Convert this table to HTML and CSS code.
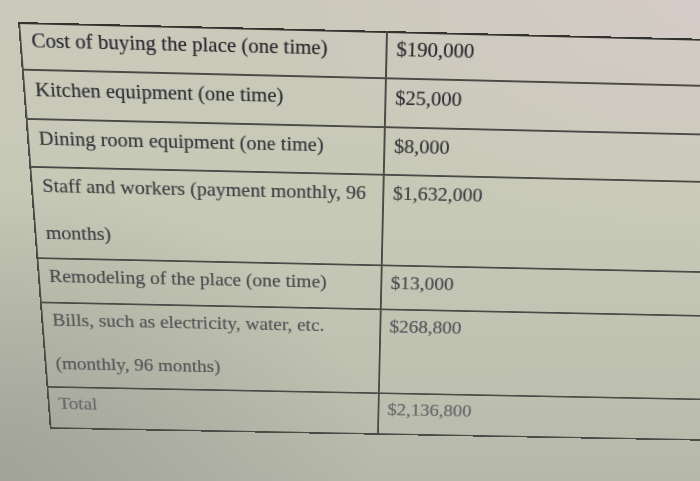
FILE: index.html
```html
<!DOCTYPE html>
<html>
<head>
<meta charset="utf-8">
<link rel="stylesheet" href="styles.css">
</head>
<body>
<div class="photo">
  <table class="costs">
    <colgroup><col class="c-label"><col class="c-value"></colgroup>
    <tr class="r1 single"><td><div class="txt">Cost of buying the place (one time)</div></td><td><div class="txt">$190,000</div></td></tr>
    <tr class="r2 single"><td><div class="txt">Kitchen equipment (one time)</div></td><td><div class="txt">$25,000</div></td></tr>
    <tr class="r3 single"><td><div class="txt">Dining room equipment (one time)</div></td><td><div class="txt">$8,000</div></td></tr>
    <tr class="r4 double"><td><div class="txt">Staff and workers (payment monthly, 96<br>months)</div></td><td><div class="txt">$1,632,000</div></td></tr>
    <tr class="r5 single"><td><div class="txt">Remodeling of the place (one time)</div></td><td><div class="txt">$13,000</div></td></tr>
    <tr class="r6 double"><td><div class="txt">Bills, such as electricity, water, etc.<br>(monthly, 96 months)</div></td><td><div class="txt">$268,800</div></td></tr>
    <tr class="r7 single"><td><div class="txt">Total</div></td><td><div class="txt">$2,136,800</div></td></tr>
  </table>
</div>
</body>
</html>
```

FILE: styles.css
```css
html, body {
  margin: 0;
  padding: 0;
  width: 700px;
  height: 481px;
  overflow: hidden;
}
body {
  background:
    radial-gradient(ellipse 420px 260px at 100% 0%, rgba(214, 204, 200, 0.85), rgba(214, 204, 200, 0) 100%),
    radial-gradient(ellipse 380px 300px at 0% 100%, rgba(160, 160, 150, 0.9), rgba(160, 160, 150, 0) 100%),
    linear-gradient(180deg, #cbc9bb 0%, #c6c9b6 45%, #bfc2b1 75%, #b6b8aa 100%);
}
.photo {
  width: 788px;
  transform-origin: 0 0;
  transform: matrix3d(1.0058, 0.024938, 0, 0.00001504, 0.083574, 1.01142, 0, 0.00027408, 0, 0, 1, 0, 18, 22, 0, 1);
}
.costs {
  border-collapse: collapse;
  table-layout: fixed;
  width: 788px;
  font-family: "Liberation Serif", "Times New Roman", serif;
  font-size: 21px;
  line-height: 52px;
}
.c-label { width: 368px; }
.c-value { width: 420px; }
.costs td {
  border: 2px solid #4a4a46;
  vertical-align: top;
  padding: 0 0 0 10px;
  white-space: nowrap;
  overflow: hidden;
}
.costs td + td { padding-left: 9px; }
.txt {
  margin-top: -7px;
  text-shadow: 0 0 1px rgba(40, 40, 45, 0.45);
}
.single td { height: 49px; }
.double td { height: 99px; }
.r1 td { height: 45px; color: #29292f; border-top-color: #333330; }
.r1 .txt { margin-top: -10px; }
.r2 td { color: #303035; }
.r3 td { color: #38383c; }
.r4 td { color: #424246; }
.r5 td { color: #4c4c4f; }
.r6 td { color: #58585b; }
.r7 td { color: #6a6a6d; }
```
